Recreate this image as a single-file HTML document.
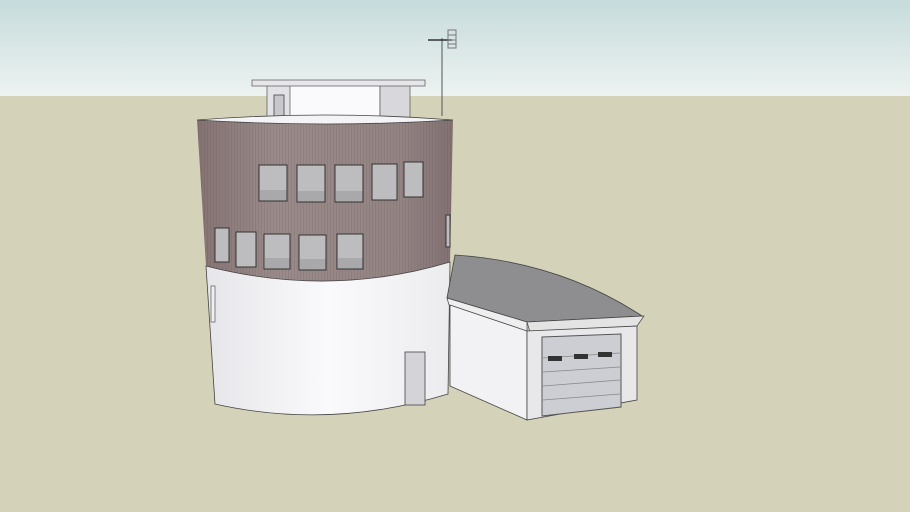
<!DOCTYPE html>
<html><head><style>html,body{margin:0;padding:0;width:910px;height:512px;overflow:hidden;background:#d4d2b8}</style></head>
<body>
<svg width="910" height="512" viewBox="0 0 910 512" xmlns="http://www.w3.org/2000/svg">
<defs>
<linearGradient id="sky" x1="0" y1="0" x2="0" y2="1"><stop offset="0" stop-color="#c6dbdb"/><stop offset="1" stop-color="#edf3f1"/></linearGradient>
<linearGradient id="brick" x1="0" y1="0" x2="1" y2="0"><stop offset="0" stop-color="#857373"/><stop offset="0.3" stop-color="#9a8a8a"/><stop offset="0.8" stop-color="#948383"/><stop offset="1" stop-color="#837172"/></linearGradient>
<linearGradient id="wall" x1="0" y1="0" x2="1" y2="0"><stop offset="0" stop-color="#e6e6ea"/><stop offset="0.5" stop-color="#fafafc"/><stop offset="1" stop-color="#ececef"/></linearGradient>
<pattern id="lines" width="3" height="6" patternUnits="userSpaceOnUse"><rect width="1" height="6" fill="#000" opacity="0.06"/></pattern>
</defs>
<rect width="910" height="96" fill="url(#sky)"/>
<rect y="96" width="910" height="416" fill="#d4d2b8"/>
<line x1="442" y1="38" x2="442" y2="116" stroke="#555" stroke-width="1"/>
<line x1="428" y1="40" x2="452" y2="40" stroke="#333" stroke-width="1.5"/>
<rect x="448" y="30" width="8" height="18" fill="none" stroke="#777" stroke-width="1"/>
<line x1="448" y1="35" x2="456" y2="35" stroke="#777"/><line x1="448" y1="40" x2="456" y2="40" stroke="#777"/><line x1="448" y1="44" x2="456" y2="44" stroke="#777"/>
<rect x="267" y="85" width="24" height="36" fill="#e2e2e6" stroke="#555" stroke-width="0.7"/>
<rect x="290" y="85" width="90" height="36" fill="#fafafc" stroke="#555" stroke-width="0.7"/>
<rect x="380" y="85" width="30" height="36" fill="#d8d8dc" stroke="#555" stroke-width="0.7"/>
<rect x="274" y="95" width="10" height="25" fill="#c8c8cc" stroke="#444" stroke-width="0.8"/>
<rect x="252" y="80" width="173" height="6" fill="#e6e6ea" stroke="#555" stroke-width="0.7"/>
<path d="M197 120 Q325 112 453 120 L450 262 Q330 298 206 266 Z" fill="url(#brick)"/>
<path d="M197 120 Q325 112 453 120 L450 262 Q330 298 206 266 Z" fill="url(#lines)"/>
<path d="M197 120 Q325 110 453 120 Q325 128 197 120 Z" fill="#f4f4f6" stroke="#444" stroke-width="0.8"/>
<path d="M206 266 Q330 298 450 262 L448 394 Q330 430 215 404 Z" fill="url(#wall)" stroke="#444" stroke-width="0.8"/>
<rect x="211" y="286" width="4" height="36" fill="#f0f0f0" stroke="#555" stroke-width="0.7"/>
<rect x="405" y="352" width="20" height="53" fill="#d4d4d8" stroke="#444" stroke-width="0.8"/>
<g fill="#bdbdbf" stroke="#333" stroke-width="1">
<rect x="259" y="165" width="28" height="36"/><rect x="297" y="165" width="28" height="37"/><rect x="335" y="165" width="28" height="37"/><rect x="372" y="164" width="25" height="36"/><rect x="404" y="162" width="19" height="35"/>
<rect x="215" y="228" width="14" height="34"/><rect x="236" y="232" width="20" height="35"/><rect x="264" y="234" width="26" height="35"/><rect x="299" y="235" width="27" height="35"/><rect x="337" y="234" width="26" height="35"/>
<rect x="446" y="215" width="4" height="32"/>
</g>
<g fill="#a9a9ab"><rect x="260" y="190" width="26.5" height="10.5"/><rect x="298" y="191" width="26.5" height="10.5"/><rect x="336" y="191" width="26.5" height="10.5"/><rect x="265" y="258" width="24.5" height="10.5"/><rect x="300" y="259" width="25.5" height="10.5"/><rect x="338" y="258" width="24.5" height="10.5"/></g>
<path d="M455 255 Q560 262 642 316 L527 322 L447 298 Z" fill="#8e8e90" stroke="#444" stroke-width="0.8"/>
<path d="M447 298 L527 322 L527 332 L449 305 Z" fill="#eeeeee" stroke="#444" stroke-width="0.7"/>
<path d="M527 322 L644 316 L637 326 L530 332 Z" fill="#e4e4e4" stroke="#444" stroke-width="0.7"/>
<path d="M450 305 L527 331 L527 420 L450 386 Z" fill="#f2f2f4" stroke="#444" stroke-width="0.8"/>
<path d="M527 331 L637 326 L637 400 L527 420 Z" fill="#e8e8ea" stroke="#444" stroke-width="0.8"/>
<path d="M542 337 L621 334 L621 407 L542 416 Z" fill="#ccced4" stroke="#555" stroke-width="1"/>
<g stroke="#888" stroke-width="0.8"><line x1="543" y1="358" x2="620" y2="353"/><line x1="543" y1="372" x2="620" y2="367"/><line x1="543" y1="386" x2="620" y2="380"/><line x1="543" y1="400" x2="620" y2="394"/></g>
<g fill="#333"><rect x="548" y="356" width="14" height="5"/><rect x="574" y="354" width="14" height="5"/><rect x="598" y="352" width="14" height="5"/></g>
</svg>
</body></html>
